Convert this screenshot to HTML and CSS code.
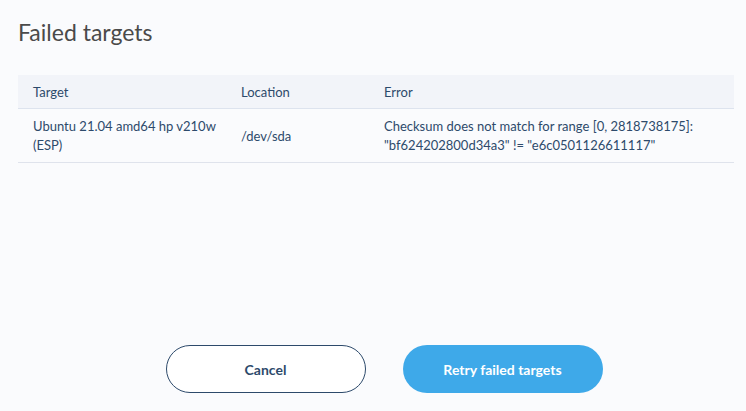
FILE: index.html
```html
<!DOCTYPE html>
<html>
<head>
<meta charset="utf-8">
<link rel="stylesheet" href="styles.css">
</head>
<body>
<div class="modal">
  <h1 class="title">Failed targets</h1>
  <table class="targets">
    <thead>
      <tr><th class="c1">Target</th><th class="c2">Location</th><th class="c3">Error</th></tr>
    </thead>
    <tbody>
      <tr>
        <td>Ubuntu 21.04 amd64 hp v210w<br>(ESP)</td>
        <td>/dev/sda</td>
        <td>Checksum does not match for range [0, 2818738175]:<br>"bf624202800d34a3" != "e6c0501126611117"</td>
      </tr>
    </tbody>
  </table>
  <div class="spacer"></div>
  <div class="actions">
    <button class="btn btn-cancel">Cancel</button>
    <button class="btn btn-primary">Retry failed targets</button>
  </div>
</div>
</body>
</html>
```
FILE: styles.css
```css
html, body {
  margin: 0;
  padding: 0;
  background: #fafbfd;
}
.modal {
  width: 746px;
  height: 411px;
  box-sizing: border-box;
  padding: 0 12px 0 18px;
  display: flex;
  flex-direction: column;
  font-family: "Lato", "Open Sans", sans-serif;
}
.title {
  margin: 17px 0 0 0;
  font-size: 23px;
  font-weight: 400;
  color: #4a4a4a;
  line-height: 30px;
}
.targets {
  margin-top: 28px;
  width: 716px;
  table-layout: fixed;
  border-collapse: collapse;
  font-size: 13px;
  color: #2d4a6b;
}
.targets th {
  background: #f2f4f9;
  font-weight: 400;
  text-align: left;
  height: 33px;
  padding: 0 15px;
  border-bottom: 1px solid #dde3ee;
}
.targets th.c1 { width: 178px; }
.targets th.c2 { width: 113px; }
.targets td {
  padding: 8px 15px 7px;
  line-height: 19px;
  border-bottom: 1px solid #dfe3ec;
  vertical-align: middle;
  white-space: nowrap;
}
.spacer { flex: 1; }
.actions {
  display: flex;
  justify-content: center;
  gap: 37px;
  margin-bottom: 18px;
  padding-left: 16px;
}
.btn {
  width: 200px;
  height: 48px;
  border-radius: 24px;
  font-family: inherit;
  font-size: 14px;
  font-weight: 700;
  cursor: pointer;
}
.btn-cancel {
  background: #fff;
  border: 1px solid #2d4a6b;
  color: #2d4a6b;
}
.btn-primary {
  background: #3ea9e9;
  border: none;
  color: #fff;
}
```
